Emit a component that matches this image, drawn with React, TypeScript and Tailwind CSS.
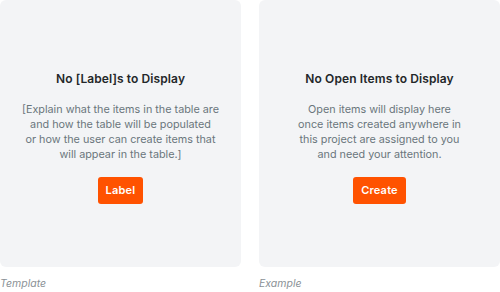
import React from 'react';

type EmptyStateProps = {
  title: string;
  body: string[];
  action: string;
  caption: string;
};

function EmptyState({ title, body, action, caption }: EmptyStateProps) {
  return (
    <div className="flex flex-col w-[241px]">
      <div className="h-[267px] rounded-[6px] bg-[#f3f4f6] flex flex-col items-center pt-[69px]">
        <h2 className="text-[12px] leading-5 font-semibold tracking-[0.1px] text-[#232729]">{title}</h2>
        <p className="mt-[13px] text-[10.8px] leading-[15px] text-[#6a767c] text-center">
          {body.map((line, i) => (
            <span key={i} className="block">
              {line}
            </span>
          ))}
        </p>
        <button className="mt-[15px] h-[27px] px-2 rounded-[3px] bg-[#ff5200] text-white text-[11px] font-semibold tracking-[0.2px]">
          {action}
        </button>
      </div>
      <div className="mt-[10px] text-[10.5px] leading-[14px] italic text-[#8a9196]">{caption}</div>
    </div>
  );
}

export default function App() {
  return (
    <div
      className="w-[500px] h-[292px] bg-white flex justify-between"
      style={{ fontFamily: 'Inter, "Noto Sans", sans-serif' }}
    >
      <EmptyState
        title="No [Label]s to Display"
        body={[
          '[Explain what the items in the table are',
          'and how the table will be populated',
          'or how the user can create items that',
          'will appear in the table.]',
        ]}
        action="Label"
        caption="Template"
      />
      <EmptyState
        title="No Open Items to Display"
        body={[
          'Open items will display here',
          'once items created anywhere in',
          'this project are assigned to you',
          'and need your attention.',
        ]}
        action="Create"
        caption="Example"
      />
    </div>
  );
}
